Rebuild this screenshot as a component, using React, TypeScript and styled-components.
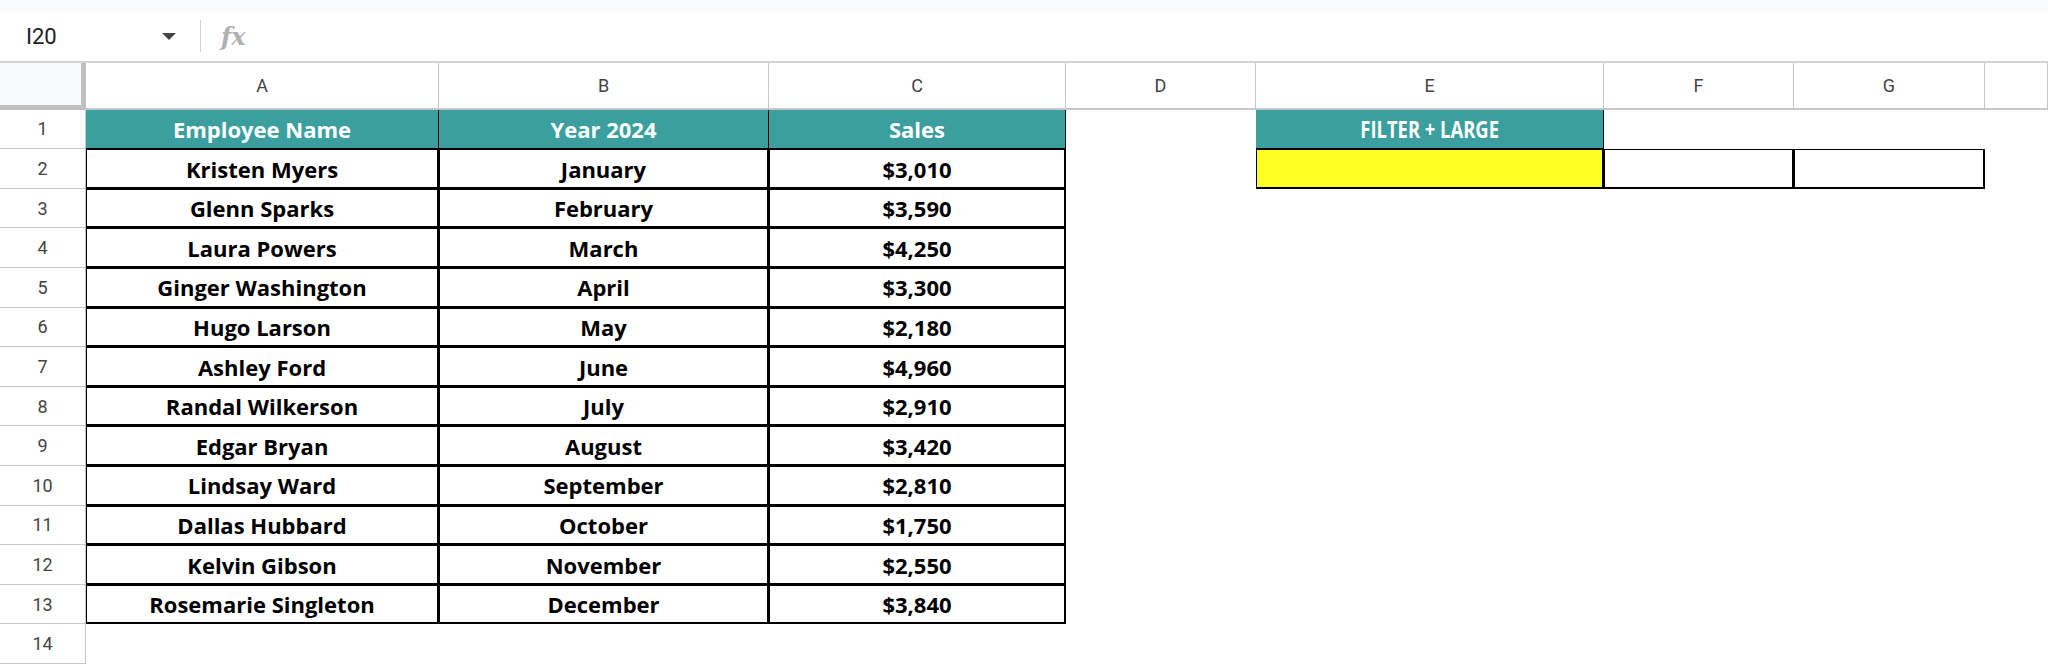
import { createGlobalStyle, styled } from "styled-components";

const GlobalStyle = createGlobalStyle`
  html, body { margin: 0; padding: 0; background: #fff; }
  body { font-family: Roboto, "Liberation Sans", sans-serif; overflow: hidden; }
`;

const COLS = ["A", "B", "C", "D", "E", "F", "G", "H"];

const data = [
  ["Kristen Myers", "January", "$3,010"],
  ["Glenn Sparks", "February", "$3,590"],
  ["Laura Powers", "March", "$4,250"],
  ["Ginger Washington", "April", "$3,300"],
  ["Hugo Larson", "May", "$2,180"],
  ["Ashley Ford", "June", "$4,960"],
  ["Randal Wilkerson", "July", "$2,910"],
  ["Edgar Bryan", "August", "$3,420"],
  ["Lindsay Ward", "September", "$2,810"],
  ["Dallas Hubbard", "October", "$1,750"],
  ["Kelvin Gibson", "November", "$2,550"],
  ["Rosemarie Singleton", "December", "$3,840"],
];

const Page = styled.div`
  width: 2048px;
  height: 664px;
  display: flex;
  flex-direction: column;
`;

const TopStrip = styled.div`
  height: 13px;
  background: #f9fbfd;
`;

const FormulaBar = styled.div`
  height: 52px;
  display: flex;
  align-items: center;
  border-bottom: 2px solid #d3d3d3;
`;

const NameBox = styled.div`
  width: 150px;
  padding-left: 26px;
  display: flex;
  align-items: center;
  justify-content: space-between;
  font-size: 22px;
  color: #202124;
`;

const Caret = styled.span`
  width: 0;
  height: 0;
  border-left: 7px solid transparent;
  border-right: 7px solid transparent;
  border-top: 7px solid #444;
`;

const Divider = styled.div`
  width: 1px;
  height: 32px;
  background: #d3d3d3;
  margin: 0 20px 0 24px;
`;

const Fx = styled.span`
  font-family: "DejaVu Serif", serif;
  font-style: italic;
  font-weight: bold;
  font-size: 24px;
  color: #b0b0b0;
`;

const Grid = styled.div`
  display: grid;
  grid-template-columns: 86px 353px 330px 297px 190px 348px 190px 191px 1fr;
  grid-template-rows: 47px repeat(14, 39.6px);
`;

const Corner = styled.div`
  background: #f8f9fa;
  border-right: 5px solid #c0c0c0;
  border-bottom: 5px solid #c0c0c0;
`;

const ColHead = styled.div`
  display: flex;
  align-items: center;
  justify-content: center;
  font-size: 18px;
  color: #444;
  border-right: 1px solid #c7c7c7;
  border-bottom: 2px solid #c7c7c7;
`;

const RowHead = styled.div`
  display: flex;
  align-items: center;
  justify-content: center;
  font-size: 18px;
  color: #444;
  border-right: 1px solid #c7c7c7;
  border-bottom: 1px solid #c7c7c7;
`;

const Cell = styled.div<{ $bg?: string; $boxed?: boolean; $head?: boolean }>`
  display: flex;
  align-items: center;
  justify-content: center;
  font-family: "Open Sans", "Liberation Sans", sans-serif;
  font-weight: 700;
  font-size: 22px;
  color: ${(p) => (p.$head ? "#fff" : "#000")};
  background: ${(p) => p.$bg || "#fff"};
  ${(p) => p.$boxed && "box-shadow: inset 0 0 0 1px #000; border-right: 1px solid #000; border-bottom: 1px solid #000;"}
  ${(p) => p.$head && "border-right: 1px solid #000; border-bottom: 1px solid #000;"}
`;

const Condensed = styled.span`
  display: inline-block;
  font-size: 23px;
  transform: scaleX(0.8);
  white-space: nowrap;
`;

const TEAL = "#3a9f9e";

export default function App() {
  const rows: React.ReactNode[] = [];
  for (let r = 1; r <= 14; r++) {
    rows.push(<RowHead key={`rh${r}`}>{r}</RowHead>);
    for (let c = 0; c < 8; c++) {
      const key = `${r}-${c}`;
      if (r === 1 && c < 3) {
        rows.push(
          <Cell key={key} $bg={TEAL} $head>
            {["Employee Name", "Year 2024", "Sales"][c]}
          </Cell>
        );
      } else if (r >= 2 && r <= 13 && c < 3) {
        rows.push(
          <Cell key={key} $boxed>
            {data[r - 2][c]}
          </Cell>
        );
      } else if (r === 1 && c === 4) {
        rows.push(
          <Cell key={key} $bg={TEAL} $head>
            <Condensed>FILTER + LARGE</Condensed>
          </Cell>
        );
      } else if (r === 2 && c === 4) {
        rows.push(<Cell key={key} $bg="#ffff22" $boxed />);
      } else if (r === 2 && (c === 5 || c === 6)) {
        rows.push(<Cell key={key} $boxed />);
      } else {
        rows.push(<Cell key={key} />);
      }
    }
  }

  return (
    <Page>
      <GlobalStyle />
      <TopStrip />
      <FormulaBar>
        <NameBox>
          I20
          <Caret />
        </NameBox>
        <Divider />
        <Fx>fx</Fx>
      </FormulaBar>
      <Grid>
        <Corner />
        {COLS.map((c) => (
          <ColHead key={c}>{c === "H" ? "" : c}</ColHead>
        ))}
        {rows}
      </Grid>
    </Page>
  );
}
